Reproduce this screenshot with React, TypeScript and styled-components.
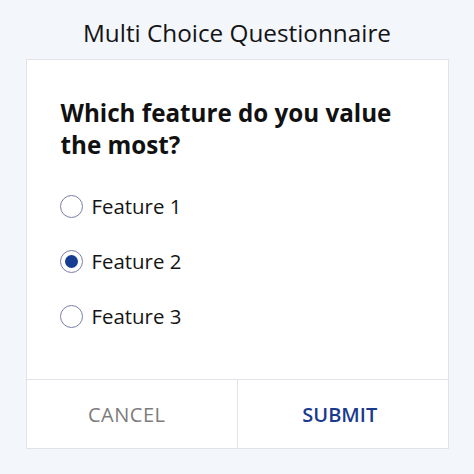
import styled, { createGlobalStyle } from 'styled-components';
import { useState } from 'react';

const GlobalStyle = createGlobalStyle`
    body {
        margin: 0;
        background: #f3f6fb;
        font-family: "Open Sans", "Noto Sans", sans-serif;
    }
`

const Page = styled.div`
    display: flex;
    flex-direction: column;
    align-items: center;
    width: 474px;
    height: 474px;
    padding-top: 17px;
    box-sizing: border-box;
`

const Title = styled.h1`
    margin: 0 0 10px;
    font-size: 24.3px;
    line-height: 32px;
    font-weight: 400;
    color: #141414;
`

const Card = styled.div`
    display: flex;
    flex-direction: column;
    width: 423px;
    background: #fff;
    border: 1px solid #e1e3e8;
    box-sizing: border-box;
`

const Body = styled.div`
    display: flex;
    flex-direction: column;
    height: 320px;
    padding: 37px 34px 0;
    box-sizing: border-box;
    border-bottom: 1px solid #e1e3e8;
`

const Question = styled.h2`
    margin: 0 0 25px;
    font-size: 24.2px;
    line-height: 32px;
    font-weight: 700;
    color: #111;
`

const Options = styled.div`
    display: flex;
    flex-direction: column;
    gap: 15px;
    margin-left: -1px;
`

const Option = styled.label`
    display: flex;
    align-items: center;
    gap: 9px;
    height: 40px;
    cursor: pointer;
    font-size: 20.4px;
    color: #141414;
`

const Radio = styled.span<{ $checked: boolean }>`
    display: flex;
    align-items: center;
    justify-content: center;
    width: 23px;
    height: 23px;
    border-radius: 50%;
    border: 1.5px solid #7b7fa6;
    box-sizing: border-box;

    &::after {
        content: '';
        width: 13px;
        height: 13px;
        border-radius: 50%;
        background: #163d91;
        display: ${p => (p.$checked ? 'block' : 'none')};
    }
`

const Footer = styled.div`
    display: grid;
    grid-template-columns: 1fr 1fr;
    height: 68px;
`

const FooterButton = styled.button<{ $primary?: boolean }>`
    border: none;
    background: #fff;
    padding: 0 ${p => (p.$primary ? '6px' : '10px')} 0 0;
    font-family: inherit;
    font-size: 20px;
    font-weight: ${p => (p.$primary ? 600 : 500)};
    letter-spacing: ${p => (p.$primary ? '0' : '0.5px')};
    color: ${p => (p.$primary ? '#1b3a8e' : '#7c7c7c')};
    cursor: pointer;

    & + & {
        border-left: 1px solid #e1e3e8;
    }
`

const features = ['Feature 1', 'Feature 2', 'Feature 3'];

export default function App() {
    const [selected, setSelected] = useState(1);

    return (
        <Page>
            <GlobalStyle />
            <Title>Multi Choice Questionnaire</Title>
            <Card>
                <Body>
                    <Question>Which feature do you value the most?</Question>
                    <Options>
                        {features.map((f, i) => (
                            <Option key={f} onClick={() => setSelected(i)}>
                                <Radio $checked={selected === i} />
                                {f}
                            </Option>
                        ))}
                    </Options>
                </Body>
                <Footer>
                    <FooterButton>CANCEL</FooterButton>
                    <FooterButton $primary>SUBMIT</FooterButton>
                </Footer>
            </Card>
        </Page>
    )
}
